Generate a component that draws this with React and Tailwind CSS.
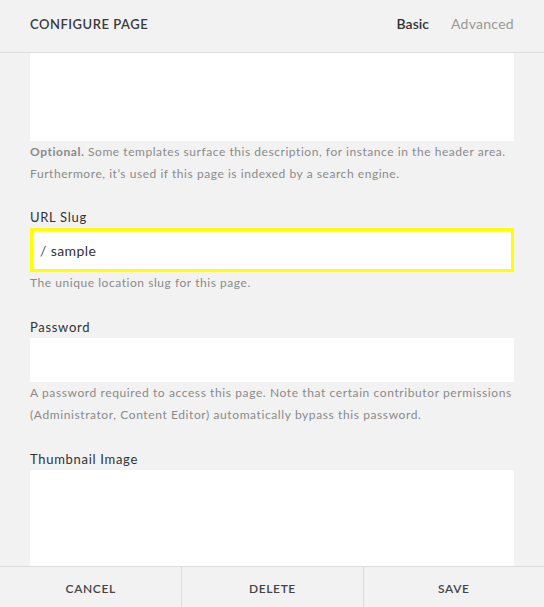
export default function App() {
  const font = { fontFamily: 'Lato, "Open Sans", sans-serif' };
  return (
    <div className="flex h-[607px] w-[544px] flex-col overflow-hidden bg-[#f2f2f2] text-[#333]" style={font}>
      <header className="flex h-[53px] shrink-0 items-baseline justify-between border-b border-[#dcdcdc] px-[30px] pt-[16px]">
        <h1 className="text-[13px] leading-[16px] font-semibold tracking-[0.04em] text-[#3a3a3a]">CONFIGURE PAGE</h1>
        <nav className="flex items-baseline gap-[22px] text-[14px] leading-[16px]">
          <span className="font-semibold text-[#333]">Basic</span>
          <span className="tracking-[0.02em] text-[#999]">Advanced</span>
        </nav>
      </header>

      <main className="min-h-0 flex-1 overflow-hidden px-[30px]">
        <div className="h-[88px] bg-white" />
        <p className="text-[12px] leading-[22px] tracking-[0.55px] text-[#8a8a8a]">
          <span className="font-bold">Optional.</span> Some templates surface this description, for instance in the header area. Furthermore, it’s used if this page is indexed by a search engine.
        </p>

        <section className="mt-[21px]">
          <label className="block text-[13px] leading-[22px] tracking-[0.7px] text-[#333]">URL Slug</label>
          <div className="flex h-[44px] items-center border-[3px] border-[#ffff00] bg-white px-[7px] text-[14px] tracking-[0.4px] text-[#333]">
            <span className="text-[#555]">/</span>&nbsp;sample
          </div>
          <p className="text-[12px] leading-[22px] tracking-[0.55px] text-[#8a8a8a]">The unique location slug for this page.</p>
        </section>

        <section className="mt-[22px]">
          <label className="block text-[13px] leading-[22px] tracking-[0.7px] text-[#333]">Password</label>
          <div className="h-[44px] bg-white" />
          <p className="text-[12px] leading-[22px] tracking-[0.6px] text-[#8a8a8a]">
            A password required to access this page. Note that certain contributor permissions (Administrator, Content Editor) automatically bypass this password.
          </p>
        </section>

        <section className="mt-[22px]">
          <label className="block text-[13px] leading-[22px] tracking-[0.7px] text-[#333]">Thumbnail Image</label>
          <div className="h-[120px] bg-white" />
        </section>
      </main>

      <footer className="grid h-[41px] shrink-0 grid-cols-3 border-t border-[#dcdcdc] text-[12px] font-semibold tracking-[0.05em] text-[#444]">
        <button className="flex items-center justify-center pt-[4px]">CANCEL</button>
        <button className="flex items-center justify-center border-l border-[#dcdcdc] pt-[4px]">DELETE</button>
        <button className="flex items-center justify-center border-l border-[#dcdcdc] pt-[4px]">SAVE</button>
      </footer>
    </div>
  );
}
